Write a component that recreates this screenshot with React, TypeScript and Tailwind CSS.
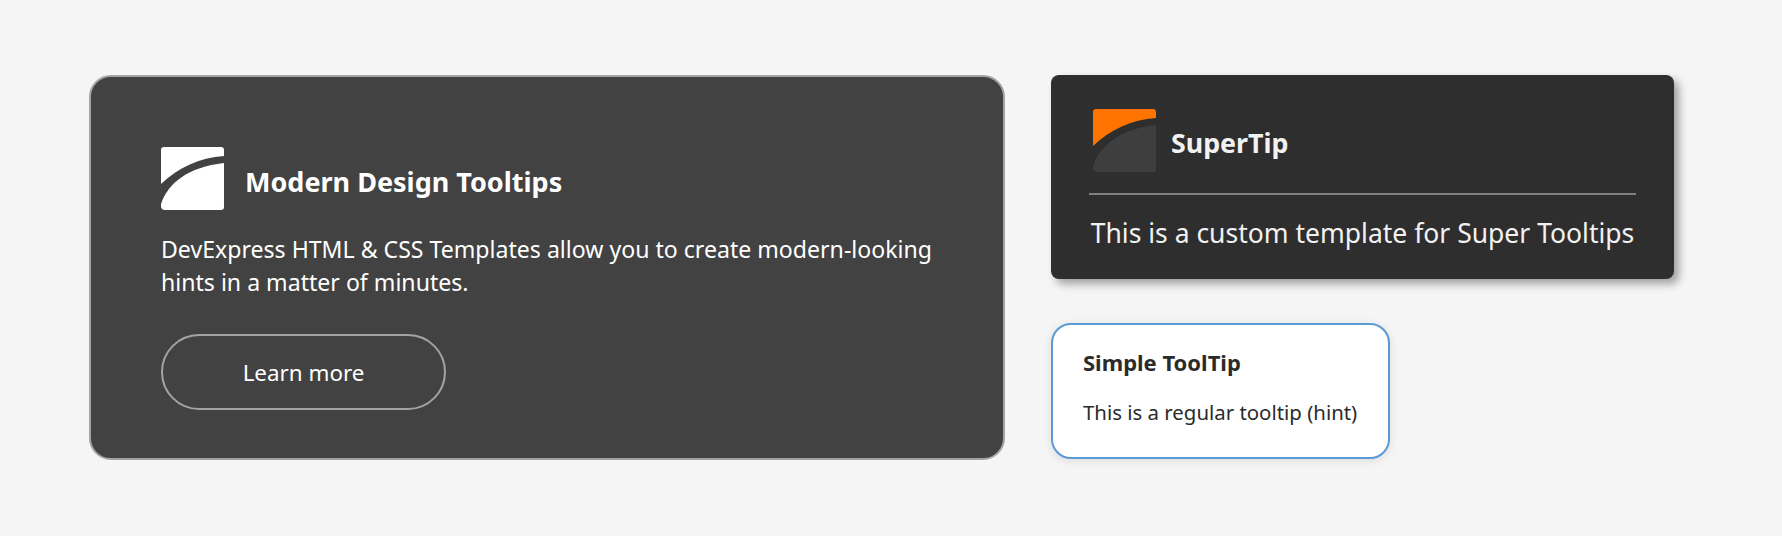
import * as React from "react"

function Logo({ top, bottom }: { top: string; bottom: string }) {
    return (
        <svg width="63" height="63" viewBox="0 0 63 63" className="shrink-0">
            <path d="M3 0H60a3 3 0 0 1 3 3V9C38 11 18 20 0 37V3a3 3 0 0 1 3-3Z" fill={top} />
            <path d="M63 16V60a3 3 0 0 1-3 3H4a4 4 0 0 1-4-4V57C7 36 27 20 63 16Z" fill={bottom} />
        </svg>
    )
}

export default function App() {
    return (
        <div className="flex h-[536px] w-full gap-[46px] bg-[#f5f5f5] pt-[75px] pl-[89px] font-['Noto_Sans',sans-serif]">
            {/* Modern tooltip */}
            <div className="h-[385px] w-[916px] rounded-[22px] border-2 border-[#a3a3a3] bg-[#424242] pt-[70px] pl-[70px] text-white">
                <div className="flex items-center gap-[21px]">
                    <Logo top="#ffffff" bottom="#ffffff" />
                    <h1 className="mt-[7px] text-[27px] font-bold">Modern Design Tooltips</h1>
                </div>
                <p className="mt-[23px] w-[790px] text-[23.1px] leading-[33px]">
                    DevExpress HTML &amp; CSS Templates allow you to create modern-looking hints in a matter of minutes.
                </p>
                <div className="mt-[35px] flex h-[76px] w-[285px] items-center justify-center rounded-full border-2 border-[#a3a3a3] pt-[2px] text-[22.4px]">
                    Learn more
                </div>
            </div>

            <div className="flex w-[623px] flex-col items-start gap-[44px]">
                {/* Super tip */}
                <div className="h-[204px] w-full rounded-[8px] bg-[#2e2e2e] pt-[34px] pl-[38px] pr-[38px] text-[#f2f2f2] shadow-[5px_5px_9px_rgba(0,0,0,0.35)]">
                    <div className="flex items-center gap-[15px] pl-[4px]">
                        <Logo top="#ff7300" bottom="#3e3e3e" />
                        <span className="mt-[6px] text-[26.8px] font-bold">SuperTip</span>
                    </div>
                    <div className="mt-[21px] h-[2px] bg-[#808080]" />
                    <p className="mt-[19px] text-center text-[26.5px]">This is a custom template for Super Tooltips</p>
                </div>

                {/* Simple tooltip */}
                <div className="h-[136px] w-[339px] rounded-[20px] border-2 border-[#5b9bd5] bg-white pt-[21px] pl-[30px] text-[#2b2b2b] shadow-[0_2px_10px_rgba(0,0,0,0.1)]">
                    <h2 className="text-[22px] font-bold">Simple ToolTip</h2>
                    <p className="mt-[18px] text-[20.4px]">This is a regular tooltip (hint)</p>
                </div>
            </div>
        </div>
    )
}
